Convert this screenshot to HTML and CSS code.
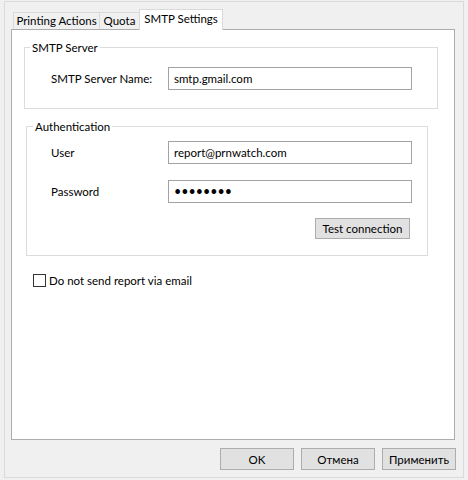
FILE: index.html
```html
<!DOCTYPE html>
<html lang="en">
<head>
  <meta charset="UTF-8">
  <title>SMTP Settings</title>
  <link rel="stylesheet" href="styles.css">
</head>
<body>
  <div class="dialog">
    <div class="tabs">
      <div class="tab tab-print">Printing Actions</div>
      <div class="tab tab-quota">Quota</div>
      <div class="tab tab-smtp active">SMTP Settings</div>
    </div>

    <div class="panel">
      <!-- server -->
      <fieldset class="group group-server">
        <legend>SMTP Server</legend>
        <div class="row">
          <label for="server">SMTP Server Name:</label>
          <input type="text" id="server" value="smtp.gmail.com">
        </div>
      </fieldset>

      <!-- login -->
      <fieldset class="group group-auth">
        <legend>Authentication</legend>
        <div class="row">
          <label for="user">User</label>
          <input type="text" id="user" value="report@prnwatch.com">
        </div>
        <div class="row row-gap">
          <label for="pass">Password</label>
          <input type="password" id="pass" class="password" value="12345678">
        </div>
        <div class="row-end">
          <button class="btn btn-test">Test connection</button>
        </div>
      </fieldset>

      <label class="check">
        <input type="checkbox">
        <span>Do not send report via email</span>
      </label>
    </div>

    <div class="actions">
      <button class="btn">OK</button>
      <button class="btn">Отмена</button>
      <button class="btn">Применить</button>
    </div>
  </div>
</body>
</html>
```

FILE: styles.css
```css
* {
  box-sizing: border-box;
}

body {
  margin: 0;
  background: #f0f0f0;
  font-family: Lato, "Liberation Sans", sans-serif;
  font-size: 11.5px;
  color: #000;
}

.dialog {
  margin: 1px 4px 0;
  height: 477px;
  border: 1px solid #dadada;
  padding: 7px 7px 0 6px;
}

/* tab strip */
.tabs {
  display: flex;
  align-items: flex-end;
  padding-left: 2px;
}

.tab {
  height: 17px;
  line-height: 16px;
  text-align: center;
  white-space: nowrap;
  border: 1px solid #d9d9d9;
  border-bottom: none;
  background: #f0f0f0;
  margin-left: -1px;
}

.tab:first-child {
  margin-left: 0;
}

.tab-print { width: 87px; }
.tab-quota { width: 41px; }
.tab-smtp { width: 84px; }

.tab.active {
  position: relative;
  z-index: 1;
  height: 21px;
  line-height: 18px;
  margin-bottom: -1px;
  background: #fff;
}

.panel {
  height: 411px;
  margin-right: 1px;
  border: 1px solid #adadad;
  background: #fff;
  padding-top: 10px;
}

/* group boxes */
.group {
  margin: 0;
  border: 1px solid #dcdcdc;
  min-width: 0;
}

.group legend {
  padding: 0 2px;
  line-height: 15px;
}

.group-server {
  margin-left: 12px;
  width: 414px;
  padding: 12px 25px 18px 5px;
}

.group-auth {
  margin: 10px 0 0 14px;
  width: 402px;
  padding: 7px 15px 16px 6px;
}

.row {
  display: flex;
  align-items: center;
  height: 23px;
}

.group-server .row {
  padding-left: 21px;
}

.group-auth .row {
  padding-left: 18px;
}

.row-gap {
  margin-top: 16px;
}

.row label {
  width: 117px;
}

.row input {
  width: 244px;
  height: 23px;
  border: 1px solid #a3a3a3;
  padding: 0 5px;
  font: inherit;
  color: #000;
  outline: none;
}

.row .password {
  font-size: 12.5px;
  letter-spacing: 0;
}

.row-end {
  display: flex;
  justify-content: flex-end;
  margin-top: 15px;
}

/* buttons */
.btn {
  height: 22px;
  padding: 0;
  border: 1px solid #adadad;
  background: #e1e1e1;
  font: inherit;
  color: #000;
}

.btn-test {
  width: 95px;
  height: 21px;
  margin-right: 2px;
}

.actions {
  display: flex;
  justify-content: flex-end;
  gap: 7px;
  margin-top: 8px;
}

.actions .btn {
  width: 74px;
}

/* checkbox */
.check {
  display: flex;
  align-items: center;
  gap: 3px;
  margin: 18px 0 0 21px;
}

.check input {
  appearance: none;
  margin: 0;
  width: 13px;
  height: 13px;
  border: 1px solid #333;
  background: #fff;
}
```
